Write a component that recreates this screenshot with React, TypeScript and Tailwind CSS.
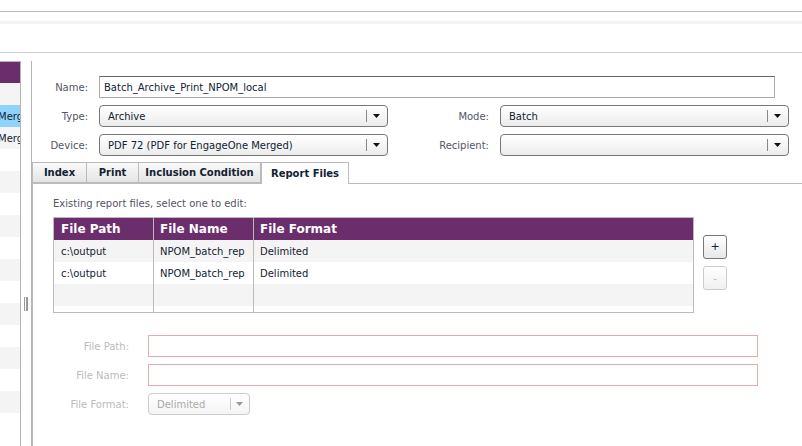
import React from 'react';

const font = { fontFamily: '"DejaVu Sans", Verdana, sans-serif' };

const Arrow = () => (
  <span className="flex items-center h-full">
    <span className="w-px h-[12px] bg-[#888]" />
    <svg width="20" height="8" viewBox="0 0 20 8"><path d="M6 2h7l-3.5 4z" fill="#111" /></svg>
  </span>
);

const Select = ({ value, w }: { value: string; w: string }) => (
  <div className={`${w} h-[22px] flex items-center justify-between border border-[#777] rounded-[4px] bg-gradient-to-b from-white to-[#ececec] pl-[8px] text-[10px] text-[#123]`}>
    <span>{value}</span>
    <Arrow />
  </div>
);

const leftRows = Array.from({ length: 16 });

export default function App() {
  return (
    <div className="w-[802px] h-[446px] bg-white overflow-hidden flex flex-col" style={font}>
      <div className="h-[12px] border-b border-[#bbb]" />
      <div className="h-[12px] border-b-[3px] border-[#f3f3f3]" />
      <div className="h-[29px] border-b border-[#ccc]" />
      <div className="flex flex-1 pt-[8px]">
        {/* left list */}
        <div className="w-[21px] border-r border-t border-[#b5b5b5] flex flex-col text-[10px] text-[#123] overflow-hidden">
          <div className="h-[21px] shrink-0 bg-[#6b2d6b]" />
          {leftRows.map((_, i) => (
            <div
              key={i}
              className={`h-[22px] shrink-0 flex items-center whitespace-nowrap ${i === 1 ? 'bg-[#8fd2fa]' : i % 2 === 0 ? 'bg-[#f4f4f4]' : 'bg-white'}`}
            >
              {i === 1 || i === 2 ? <span className="-ml-[2px]">Merg</span> : null}
            </div>
          ))}
        </div>
        {/* splitter */}
        <div className="w-[11px] flex items-center justify-center border-r border-[#b5b5b5]">
          <div className="w-[4px] h-[14px] mt-[100px] border-x border-[#999] flex justify-center"><div className="w-px bg-[#999]" /></div>
        </div>
        {/* main */}
        <div className="flex-1 flex flex-col">
          <div className="flex flex-col gap-[7px] pt-[15px] text-[10px] text-[#556]">
            <div className="flex items-center">
              <span className="w-[56px] text-right">Name:</span>
              <div className="ml-[11px] w-[676px] h-[22px] border border-[#aaa] border-t-[#666] flex items-center pl-[4px] text-[#123]">Batch_Archive_Print_NPOM_local</div>
            </div>
            <div className="flex items-center">
              <span className="w-[56px] text-right">Type:</span>
              <div className="ml-[11px]"><Select value="Archive" w="w-[289px]" /></div>
              <span className="w-[101px] text-right">Mode:</span>
              <div className="ml-[11px]"><Select value="Batch" w="w-[289px]" /></div>
            </div>
            <div className="flex items-center">
              <span className="w-[56px] text-right">Device:</span>
              <div className="ml-[11px]"><Select value="PDF 72 (PDF for EngageOne Merged)" w="w-[289px]" /></div>
              <span className="w-[101px] text-right">Recipient:</span>
              <div className="ml-[11px]"><Select value="" w="w-[289px]" /></div>
            </div>
          </div>
          {/* tabs */}
          <div className="flex items-end mt-[6px] h-[22px] border-b border-[#bbb] text-[10px] font-bold text-[#123]">
            <div className="w-[55px] h-[21px] flex items-center justify-center border border-[#bbb] bg-gradient-to-b from-[#fafafa] to-[#e4e4e4]">Index</div>
            <div className="w-[52px] h-[21px] flex items-center justify-center border border-l-0 border-[#bbb] bg-gradient-to-b from-[#fafafa] to-[#e4e4e4]">Print</div>
            <div className="w-[122px] h-[21px] flex items-center justify-center border border-l-0 border-[#bbb] bg-gradient-to-b from-[#fafafa] to-[#e4e4e4]">Inclusion Condition</div>
            <div className="w-[88px] h-[22px] -mb-px flex items-center justify-center border border-b-0 border-[#bbb] bg-white">Report Files</div>
          </div>
          <div className="flex-1 border-l border-[#bbb] pl-[20px]">
            <div className="mt-[12px] text-[10px] text-[#556]">Existing report files, select one to edit:</div>
            <div className="flex mt-[6px]">
              <div className="w-[641px] h-[96px] border border-[#bbb] text-[10px] text-[#123]">
                <div className="flex h-[22px] bg-[#6b2d6b] text-white font-bold text-[12px]">
                  <div className="w-[100px] pl-[7px] flex items-center border-r border-[#bbb]">File Path</div>
                  <div className="w-[100px] pl-[6px] flex items-center border-r border-[#bbb]">File Name</div>
                  <div className="flex-1 pl-[6px] flex items-center">File Format</div>
                </div>
                {[['c:\\output', 'NPOM_batch_rep', 'Delimited'], ['c:\\output', 'NPOM_batch_rep', 'Delimited'], ['', '', ''], ['', '', '']].map((r, i) => (
                  <div key={i} className={`flex ${i === 3 ? 'h-[6px]' : 'h-[22px]'} ${i % 2 === 0 ? 'bg-[#f4f4f4]' : 'bg-white'}`}>
                    <div className="w-[100px] pl-[7px] flex items-center border-r border-[#bbb]">{r[0]}</div>
                    <div className="w-[100px] pl-[6px] flex items-center border-r border-[#bbb] overflow-hidden whitespace-nowrap">{r[1]}</div>
                    <div className="flex-1 pl-[6px] flex items-center">{r[2]}</div>
                  </div>
                ))}
              </div>
              <div className="ml-[9px] mt-[18px] flex flex-col gap-[7px]">
                <div className="w-[24px] h-[24px] rounded-[3px] border border-[#777] bg-gradient-to-b from-white to-[#e8e8e8] flex items-center justify-center text-[11px] text-[#123]">+</div>
                <div className="w-[24px] h-[24px] rounded-[3px] border border-[#ccc] bg-gradient-to-b from-white to-[#f0f0f0] flex items-center justify-center text-[10px] text-[#bbb]">-</div>
              </div>
            </div>
            <div className="mt-[22px] flex flex-col gap-[7px] text-[10px] text-[#bbb]">
              <div className="flex items-center">
                <span className="w-[76px] text-right">File Path:</span>
                <div className="ml-[19px] w-[610px] h-[22px] border border-[#e8a8b0]" />
              </div>
              <div className="flex items-center">
                <span className="w-[76px] text-right">File Name:</span>
                <div className="ml-[19px] w-[610px] h-[22px] border border-[#e8a8b0]" />
              </div>
              <div className="flex items-center">
                <span className="w-[76px] text-right">File Format:</span>
                <div className="ml-[19px] w-[102px] h-[22px] flex items-center justify-between border border-[#ccc] rounded-[4px] bg-gradient-to-b from-white to-[#f4f4f4] pl-[8px] text-[#aaa]">
                  <span>Delimited</span>
                  <span className="flex items-center"><span className="w-px h-[12px] bg-[#ccc]" /><svg width="18" height="8" viewBox="0 0 18 8"><path d="M5 2h7l-3.5 4z" fill="#999" /></svg></span>
                </div>
              </div>
            </div>
          </div>
        </div>
      </div>
    </div>
  );
}
